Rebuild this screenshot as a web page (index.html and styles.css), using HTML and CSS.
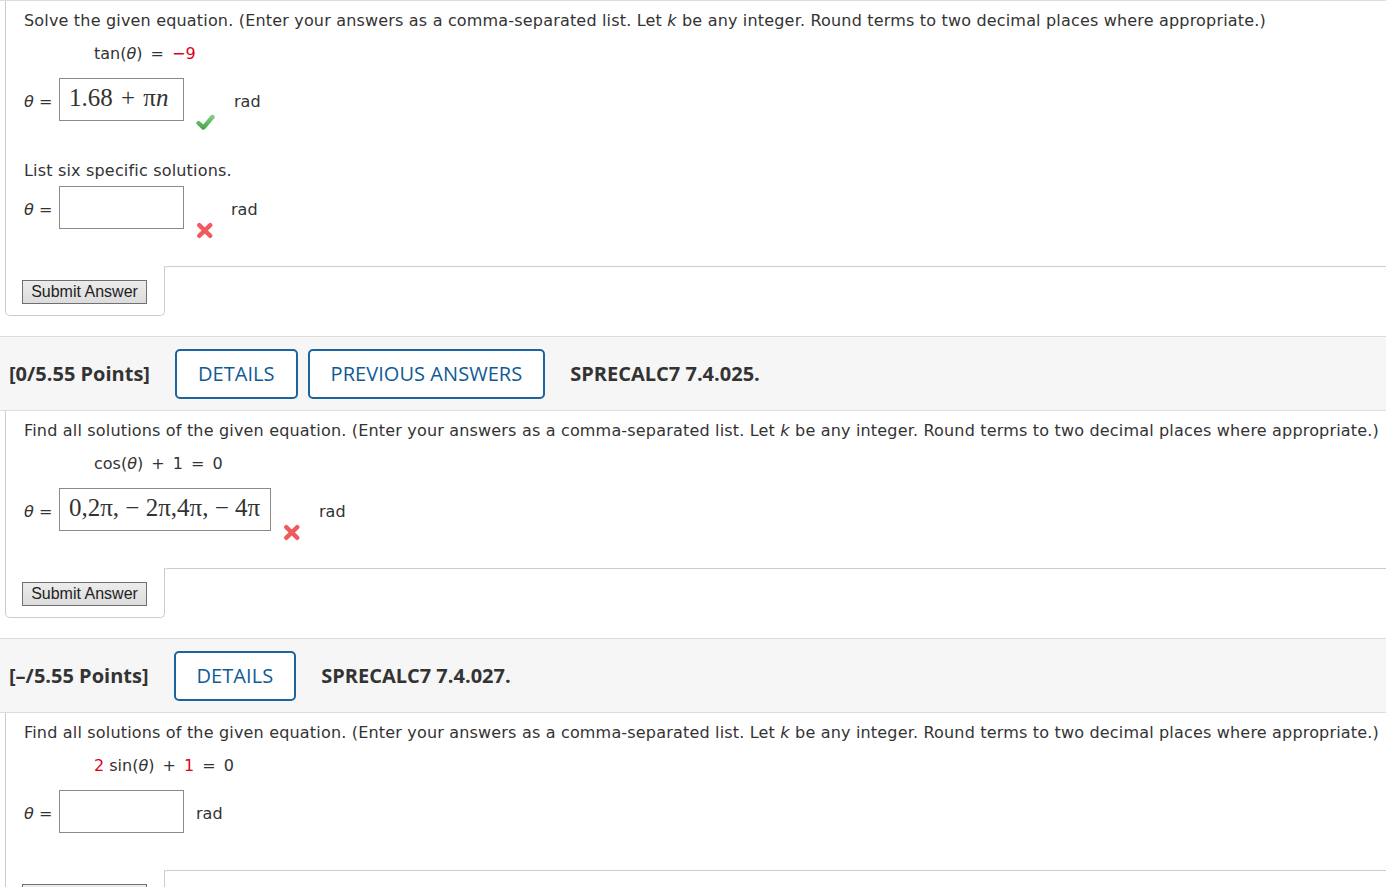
FILE: index.html
```html
<!DOCTYPE html>
<html lang="en">
<head>
<meta charset="utf-8">
<title>Questions</title>
<link rel="stylesheet" href="styles.css">
</head>
<body>
<div class="top-rule"></div>

<section class="question">
  <div class="q-body">
    <p class="prompt">Solve the given equation. (Enter your answers as a comma-separated list. Let <i>k</i> be any integer. Round terms to two decimal places where appropriate.)</p>
    <p class="eq">tan(<i>θ</i>) <span class="op">=</span> <span class="red">−9</span></p>
    <div class="row">
      <span class="lbl"><i>θ</i> =</span>
      <div class="ans"><span class="math">1.68 <span class="mop">+</span> π<i>n</i></span></div>
      <span class="icon">
        <svg width="19" height="17" viewBox="0 0 19 17"><defs><linearGradient id="gc" x1="0" y1="0" x2="0" y2="1"><stop offset="0" stop-color="#7ccc7c"/><stop offset="1" stop-color="#4ea64e"/></linearGradient></defs><polyline points="2.6,9 7.4,13.6 16.4,3" fill="none" stroke="url(#gc)" stroke-width="4.4" stroke-linecap="round" stroke-linejoin="round"/></svg>
      </span>
      <span class="unit">rad</span>
    </div>
    <p class="prompt sub">List six specific solutions.</p>
    <div class="row tight">
      <span class="lbl"><i>θ</i> =</span>
      <div class="ans"></div>
      <span class="icon">
        <svg width="18" height="17" viewBox="0 0 18 17"><g stroke="#f05a5e" stroke-width="4.4" stroke-linecap="round"><line x1="3.2" y1="3.2" x2="14.3" y2="13.8"/><line x1="14.3" y1="3.2" x2="3.2" y2="13.8"/></g></svg>
      </span>
      <span class="unit unit-x">rad</span>
    </div>
  </div>
  <div class="q-foot">
    <div class="submit-box"><button class="submit" type="button">Submit Answer</button></div>
    <div class="foot-line"></div>
  </div>
</section>

<section class="question">
  <header class="q-head">
    <span class="points">[0/5.55 Points]</span>
    <button class="hbtn first" type="button">DETAILS</button>
    <button class="hbtn" type="button">PREVIOUS ANSWERS</button>
    <span class="qid">SPRECALC7 7.4.025.</span>
  </header>
  <div class="q-body">
    <p class="prompt">Find all solutions of the given equation. (Enter your answers as a comma-separated list. Let <i>k</i> be any integer. Round terms to two decimal places where appropriate.)</p>
    <p class="eq">cos(<i>θ</i>) <span class="op">+</span> 1 <span class="op">=</span> 0</p>
    <div class="row">
      <span class="lbl"><i>θ</i> =</span>
      <div class="ans wide"><span class="math">0,2π, − 2π,4π, − 4π</span></div>
      <span class="icon">
        <svg width="18" height="17" viewBox="0 0 18 17"><g stroke="#f05a5e" stroke-width="4.4" stroke-linecap="round"><line x1="3.2" y1="3.2" x2="14.3" y2="13.8"/><line x1="14.3" y1="3.2" x2="3.2" y2="13.8"/></g></svg>
      </span>
      <span class="unit unit-x2">rad</span>
    </div>
  </div>
  <div class="q-foot">
    <div class="submit-box"><button class="submit" type="button">Submit Answer</button></div>
    <div class="foot-line"></div>
  </div>
</section>

<section class="question">
  <header class="q-head">
    <span class="points">[–/5.55 Points]</span>
    <button class="hbtn first" type="button">DETAILS</button>
    <span class="qid">SPRECALC7 7.4.027.</span>
  </header>
  <div class="q-body">
    <p class="prompt">Find all solutions of the given equation. (Enter your answers as a comma-separated list. Let <i>k</i> be any integer. Round terms to two decimal places where appropriate.)</p>
    <p class="eq"><span class="red">2</span> sin(<i>θ</i>) <span class="op">+</span> <span class="red">1</span> <span class="op">=</span> 0</p>
    <div class="row">
      <span class="lbl"><i>θ</i> =</span>
      <div class="ans"></div>
      <span class="unit unit-plain">rad</span>
    </div>
  </div>
  <div class="q-foot">
    <div class="submit-box"><button class="submit" type="button">Submit Answer</button></div>
    <div class="foot-line"></div>
  </div>
</section>
</body>
</html>
```

FILE: styles.css
```css
html, body {
  margin: 0;
  padding: 0;
  background: #fff;
}
body {
  font-family: "DejaVu Sans", Verdana, sans-serif;
  font-size: 16px;
  color: #333;
  overflow: hidden;
  width: 1386px;
}
.top-rule {
  border-top: 1px solid #dddddd;
}
.question + .question {
  margin-top: 20px;
}
.q-head {
  display: flex;
  align-items: center;
  height: 73px;
  border-top: 1px solid #dddddd;
  border-bottom: 1px solid #dddddd;
  background: #f6f6f6;
  padding-left: 9px;
  font-family: "Open Sans", sans-serif;
  font-size: 20px;
}
.points, .qid {
  font-weight: 700;
  color: #333;
  white-space: nowrap;
}
.hbtn {
  font-family: "Open Sans", sans-serif;
  font-size: 20px;
  font-weight: 500;
  letter-spacing: 0.05px;
  color: #0f5b95;
  background: #fff;
  border: 2px solid #1b649c;
  border-radius: 5px;
  height: 50px;
  padding: 0 21px;
  margin: 0 0 0 10px;
  white-space: nowrap;
  line-height: 1;
}
.hbtn.first {
  margin-left: 25px;
}
.qid {
  margin-left: 25px;
}
.q-body {
  margin-left: 5px;
  border-left: 1px solid #cccccc;
  padding: 9px 0 37px 18px;
}
.prompt {
  margin: 0;
  line-height: 22px;
  white-space: nowrap;
  letter-spacing: 0.18px;
}
.prompt.sub {
  margin-top: 39px;
}
.eq {
  margin: 11px 0 0 70px;
  line-height: 22px;
  white-space: nowrap;
}
.eq .op {
  margin: 0 3px;
}
.red {
  color: #e0001a;
}
.row {
  display: flex;
  align-items: center;
  margin-top: 13px;
  height: 43px;
}
.row.tight {
  margin-top: 4px;
}
.lbl {
  width: 35px;
  white-space: nowrap;
  padding-top: 3px;
}
.ans {
  box-sizing: border-box;
  width: 125px;
  height: 43px;
  border: 1px solid #8a8a8a;
  padding: 0 9px;
  display: flex;
  align-items: center;
  white-space: nowrap;
}
.ans.wide {
  width: 212px;
}
.math {
  font-family: "Liberation Serif", "DejaVu Serif", serif;
  font-size: 25px;
  color: #333;
  padding-bottom: 3px;
}
.mop {
  margin: 0 2px;
}
.icon {
  align-self: flex-end;
  margin: 0 0 -10px 12px;
  height: 17px;
  display: flex;
}
.unit {
  margin-left: 19px;
  padding-top: 3px;
}
.unit-x {
  margin-left: 17px;
}
.unit-x2 {
  margin-left: 18px;
}
.unit-plain {
  margin-left: 12px;
}
.q-foot {
  display: flex;
  margin-left: 5px;
}
.submit-box {
  box-sizing: border-box;
  width: 160px;
  border: 1px solid #cccccc;
  border-top: none;
  border-radius: 0 0 5px 5px;
  padding: 14px 0 11px 16px;
}
.submit {
  font-family: "Liberation Sans", Arial, sans-serif;
  font-size: 16px;
  color: #222;
  height: 24px;
  width: 125px;
  padding: 0;
  border: 1px solid #707070;
  border-radius: 0;
  background: linear-gradient(#ececec, #dcdcdc);
  display: block;
  line-height: 20px;
}
.foot-line {
  flex: 1;
  border-top: 1px solid #cccccc;
  border-top-left-radius: 4px;
  margin-left: -1px;
}
```
